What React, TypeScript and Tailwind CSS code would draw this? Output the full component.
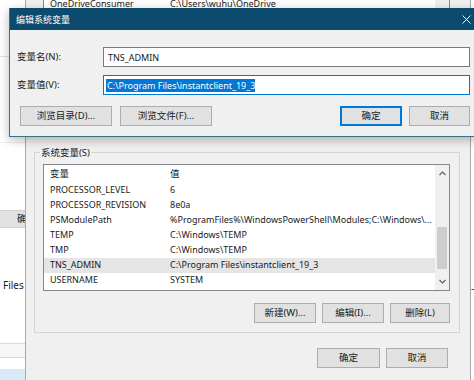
import clsx from 'clsx';

const sysVars: [string, string][] = [
  ['PROCESSOR_LEVEL', '6'],
  ['PROCESSOR_REVISION', '8e0a'],
  ['PSModulePath', '%ProgramFiles%\\WindowsPowerShell\\Modules;C:\\Windows\\...'],
  ['TEMP', 'C:\\Windows\\TEMP'],
  ['TMP', 'C:\\Windows\\TEMP'],
  ['TNS_ADMIN', 'C:\\Program Files\\instantclient_19_3'],
  ['USERNAME', 'SYSTEM'],
];

function Btn({ className, primary, children }: { className?: string; primary?: boolean; children: React.ReactNode }) {
  return (
    <div
      className={clsx(
        'flex h-[20px] shrink-0 items-center justify-center bg-[#e1e1e1] text-[9.5px] text-[#1a1a1a]',
        primary ? 'border-2 border-[#0078d7]' : 'border border-[#adadad]',
        className,
      )}
    >
      {children}
    </div>
  );
}

function Chevron({ up }: { up?: boolean }) {
  return (
    <svg width="7" height="5" viewBox="0 0 7 5" className="text-[#606060]">
      <polyline
        points={up ? '0.5,4 3.5,1 6.5,4' : '0.5,1 3.5,4 6.5,1'}
        fill="none"
        stroke="currentColor"
        strokeWidth="1.2"
      />
    </svg>
  );
}

function Row({ name, value, selected }: { name: string; value: string; selected?: boolean }) {
  return (
    <div className={clsx('flex h-[15px] items-center whitespace-nowrap leading-[14px]', selected && 'bg-[#e5e5e5]')}>
      <div className="w-[126px] shrink-0 pl-[6px]">{name}</div>
      <div className="min-w-0">{value}</div>
    </div>
  );
}

export default function App() {
  return (
    <div className="relative h-[380px] w-[474px] overflow-hidden bg-white font-['Noto_Sans','Noto_Sans_CJK_SC',sans-serif] text-[9px] leading-none text-[#1a1a1a]">
      {/* window behind, left strip */}
      <div className="absolute left-0 top-0 flex h-full w-[26px] flex-col bg-white">
        <div className="h-[57px] shrink-0 border-b border-[#e3e3e3]" />
        <div className="h-[86px] shrink-0 border-b border-[#ececec]" />
        <div className="h-[67px] shrink-0" />
        <div className="flex h-[18px] shrink-0 items-center overflow-hidden whitespace-nowrap border-y border-[#d0d0d0] bg-[#e1e1e1] pl-[17px] text-[9.5px]">
          确定
        </div>
        <div className="h-[52px] shrink-0" />
        <div className="pl-[3px] text-[10px]">Files</div>
        <div className="h-[53px] shrink-0" />
        <div className="h-[15px] shrink-0 border-y border-[#dadada] bg-[#f7f7f7]" />
        <div className="h-[12px] shrink-0 border-b border-[#e6e6e6]" />
        <div className="flex-1 bg-[#d8e9f8]" />
      </div>

      {/* window behind, right strip */}
      <div className="absolute left-[470px] top-[280px] pl-[1px] text-[10px]">上</div>

      {/* 环境变量 dialog */}
      <div className="absolute left-[25px] top-0 flex h-[380px] w-[446px] flex-col border-x border-[#a8a8a8] bg-[#f0f0f0]">
        {/* user variables list (mostly covered) */}
        <div className="ml-[17px] flex h-[100px] w-[407px] border-x border-b border-[#828790] bg-white">
          <div className="-mt-[4px] flex-1">
            <Row name="OneDriveConsumer" value="C:\Users\wuhu\OneDrive" />
          </div>
          <div className="w-[14px] bg-[#f0f0f0]" />
        </div>

        {/* 系统变量 groupbox */}
        <fieldset className="ml-[8px] mt-[48px] h-[185px] w-[426px] border border-[#d5d5d5]">
          <legend className="ml-[5px] px-[1px] text-[9.5px]">系统变量(S)</legend>
          <div className="ml-[8px] mt-[6px] flex h-[127px] w-[407px] border border-[#828790] bg-white">
            <div className="min-w-0 flex-1 overflow-hidden">
              <div className="flex h-[18px] items-center text-[9.5px]">
                <div className="w-[126px] shrink-0 pl-[6px]">变量</div>
                <div>值</div>
              </div>
              {sysVars.map(([n, v]) => (
                <Row key={n} name={n} value={v} selected={n === 'TNS_ADMIN'} />
              ))}
            </div>
            <div className="flex w-[14px] flex-col bg-[#f0f0f0]">
              <div className="flex h-[17px] items-center justify-center">
                <Chevron up />
              </div>
              <div className="flex-1 pt-[45px]">
                <div className="mx-[2px] h-[42px] bg-[#cdcdcd]" />
              </div>
              <div className="flex h-[17px] items-center justify-center">
                <Chevron />
              </div>
            </div>
          </div>
          <div className="mr-[9px] mt-[12px] flex justify-end gap-[6px]">
            <Btn className="w-[62px]">新建(W)...</Btn>
            <Btn className="w-[62px]">编辑(I)...</Btn>
            <Btn className="w-[60px]">删除(L)</Btn>
          </div>
        </fieldset>

        <div className="mr-[22px] mt-[15px] flex justify-end gap-[6px]">
          <Btn className="w-[63px]">确定</Btn>
          <Btn className="w-[62px]">取消</Btn>
        </div>
      </div>

      {/* 编辑系统变量 dialog */}
      <div className="absolute left-[9px] top-[8px] flex w-[470px] flex-col border-x border-b border-[#3f6e8a] bg-[#f0f0f0] shadow-[0_3px_10px_rgba(0,0,0,0.28)]">
        <div className="flex h-[22px] items-center justify-between bg-[#0c4b6e] pl-[6px] pr-[7px] text-[9px] text-white">
          <span>编辑系统变量</span>
          <svg width="9" height="9" viewBox="0 0 9 9">
            <path d="M0.5 0.5 L8.5 8.5 M8.5 0.5 L0.5 8.5" stroke="white" strokeWidth="1" />
          </svg>
        </div>
        <div className="flex flex-col pb-[10px] pl-[7px] pr-[8px] pt-[17px]">
          <div className="flex items-center">
            <div className="w-[86px] shrink-0 text-[9.5px]">变量名(N):</div>
            <div className="flex h-[20px] flex-1 items-center border border-[#7a7a7a] bg-white pl-[4px]">TNS_ADMIN</div>
          </div>
          <div className="mt-[8px] flex items-center">
            <div className="w-[86px] shrink-0 text-[9.5px]">变量值(V):</div>
            <div className="flex h-[20px] flex-1 items-center border border-[#0078d7] bg-white pl-[2px]">
              <span className="bg-[#0078d7] py-[2px] pl-[1px] text-white">C:\Program Files\instantclient_19_3</span>
            </div>
          </div>
          <div className="mt-[11px] flex items-center">
            <Btn className="ml-[3px] w-[92px]">浏览目录(D)...</Btn>
            <Btn className="ml-[8px] w-[92px]">浏览文件(F)...</Btn>
            <div className="flex-1" />
            <Btn primary className="w-[62px]">确定</Btn>
            <Btn className="ml-[7px] w-[61px]">取消</Btn>
          </div>
        </div>
      </div>
    </div>
  );
}
